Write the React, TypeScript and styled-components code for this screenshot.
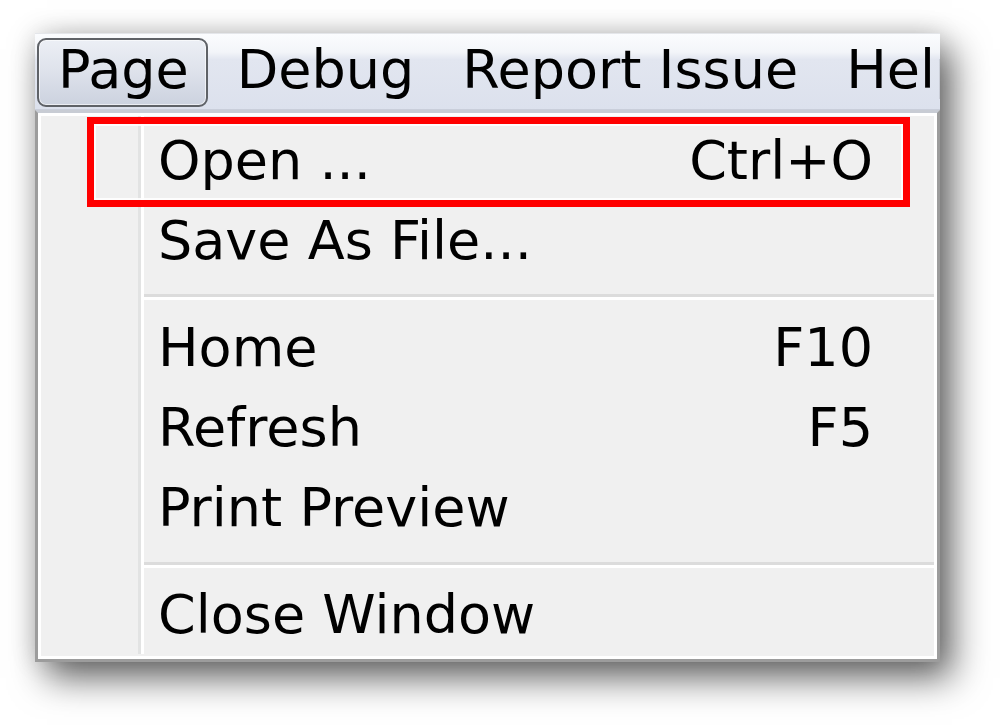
import React from 'react';
import styled, { createGlobalStyle } from 'styled-components';

const GlobalStyle = createGlobalStyle`
  html, body {
    margin: 0;
    padding: 0;
    background: #ffffff;
  }
  body {
    font-family: 'DejaVu Sans', Verdana, sans-serif;
    color: #000;
  }
`;

const Stage = styled.div`
  width: 1000px;
  height: 725px;
  padding: 33px 0 0 35px;
  box-sizing: border-box;
  overflow: hidden;
`;

const Window = styled.div`
  width: 905px;
  display: flex;
  flex-direction: column;
  box-shadow: 12px 16px 34px rgba(0, 0, 0, 0.6), 0 0 24px rgba(0, 0, 0, 0.14);
`;

const MenuBar = styled.div`
  height: 77px;
  box-sizing: border-box;
  display: flex;
  align-items: stretch;
  gap: 8px;
  padding: 4px 0 2px 2px;
  overflow: hidden;
  white-space: nowrap;
  background: linear-gradient(
    to bottom,
    #fbfcfe 0%,
    #f3f5f9 24%,
    #e2e6f0 34%,
    #dce1ed 100%
  );
  border-top: 1px solid #e4e6ea;
  border-bottom: 1px solid #c9ceda;
`;

const BarItem = styled.div<{ $active?: boolean }>`
  flex: none;
  display: flex;
  align-items: center;
  padding: 0 17px 6px 19px;
  font-size: 54px;
  line-height: 1;
  border: 2px solid ${({ $active }) => ($active ? '#5f6267' : 'transparent')};
  border-radius: 9px;
  background: ${({ $active }) =>
    $active ? 'linear-gradient(to bottom, #eceff5 0%, #dfe3ec 45%, #ccd2df 100%)' : 'none'};
  box-shadow: ${({ $active }) => ($active ? 'inset 0 0 0 1px rgba(255,255,255,0.6)' : 'none')};
`;

const Dropdown = styled.div`
  position: relative;
  display: flex;
  background: #f0f0f0;
  border: 3px solid #9c9c9c;
  border-top-color: #c8ccd4;
  box-shadow: inset 0 0 0 3px #ffffff;
`;

const Gutter = styled.div`
  flex: none;
  width: 97px;
  margin: 3px 0 5px 3px;
  border-right: 3px solid #e2e3e3;
  box-shadow: 3px 0 0 #ffffff;
`;

const Items = styled.div`
  flex: 1;
  display: flex;
  flex-direction: column;
  padding: 8px 3px 4px 3px;
`;

const Item = styled.div`
  height: 80px;
  display: flex;
  align-items: center;
  justify-content: space-between;
  padding: 0 61px 0 14px;
  font-size: 54px;
  line-height: 80px;
  white-space: nowrap;
`;

const Separator = styled.div<{ $offset: number }>`
  height: 27px;
  box-sizing: border-box;
  padding-top: ${({ $offset }) => $offset}px;

  &::before {
    content: '';
    display: block;
    height: 3px;
    background: #dcdcdc;
    border-bottom: 3px solid #ffffff;
  }
`;

const Highlight = styled.div`
  position: absolute;
  left: 49px;
  top: 4px;
  width: 823px;
  height: 90px;
  box-sizing: border-box;
  border: 7px solid #ff0000;
  box-shadow: inset 0 0 0 2px rgba(255, 255, 255, 0.85);
  pointer-events: none;
`;

type Entry =
  | { kind: 'item'; label: string; shortcut?: string }
  | { kind: 'sep'; offset: number };

const entries: Entry[] = [
  { kind: 'item', label: 'Open ...', shortcut: 'Ctrl+O' },
  { kind: 'item', label: 'Save As File...' },
  { kind: 'sep', offset: 13 },
  { kind: 'item', label: 'Home', shortcut: 'F10' },
  { kind: 'item', label: 'Refresh', shortcut: 'F5' },
  { kind: 'item', label: 'Print Preview' },
  { kind: 'sep', offset: 14 },
  { kind: 'item', label: 'Close Window' },
];

const menus = ['Page', 'Debug', 'Report Issue', 'Help'];

export default function App() {
  return (
    <>
      <GlobalStyle />
      <Stage>
        <Window>
          <MenuBar>
            {menus.map((m, i) => (
              <BarItem key={m} $active={i === 0}>
                {m}
              </BarItem>
            ))}
          </MenuBar>
          <Dropdown>
            <Gutter />
            <Items>
              {entries.map((e, i) =>
                e.kind === 'sep' ? (
                  <Separator key={i} $offset={e.offset} />
                ) : (
                  <Item key={i}>
                    <span>{e.label}</span>
                    {e.shortcut && <span>{e.shortcut}</span>}
                  </Item>
                )
              )}
            </Items>
            <Highlight />
          </Dropdown>
        </Window>
      </Stage>
    </>
  );
}
